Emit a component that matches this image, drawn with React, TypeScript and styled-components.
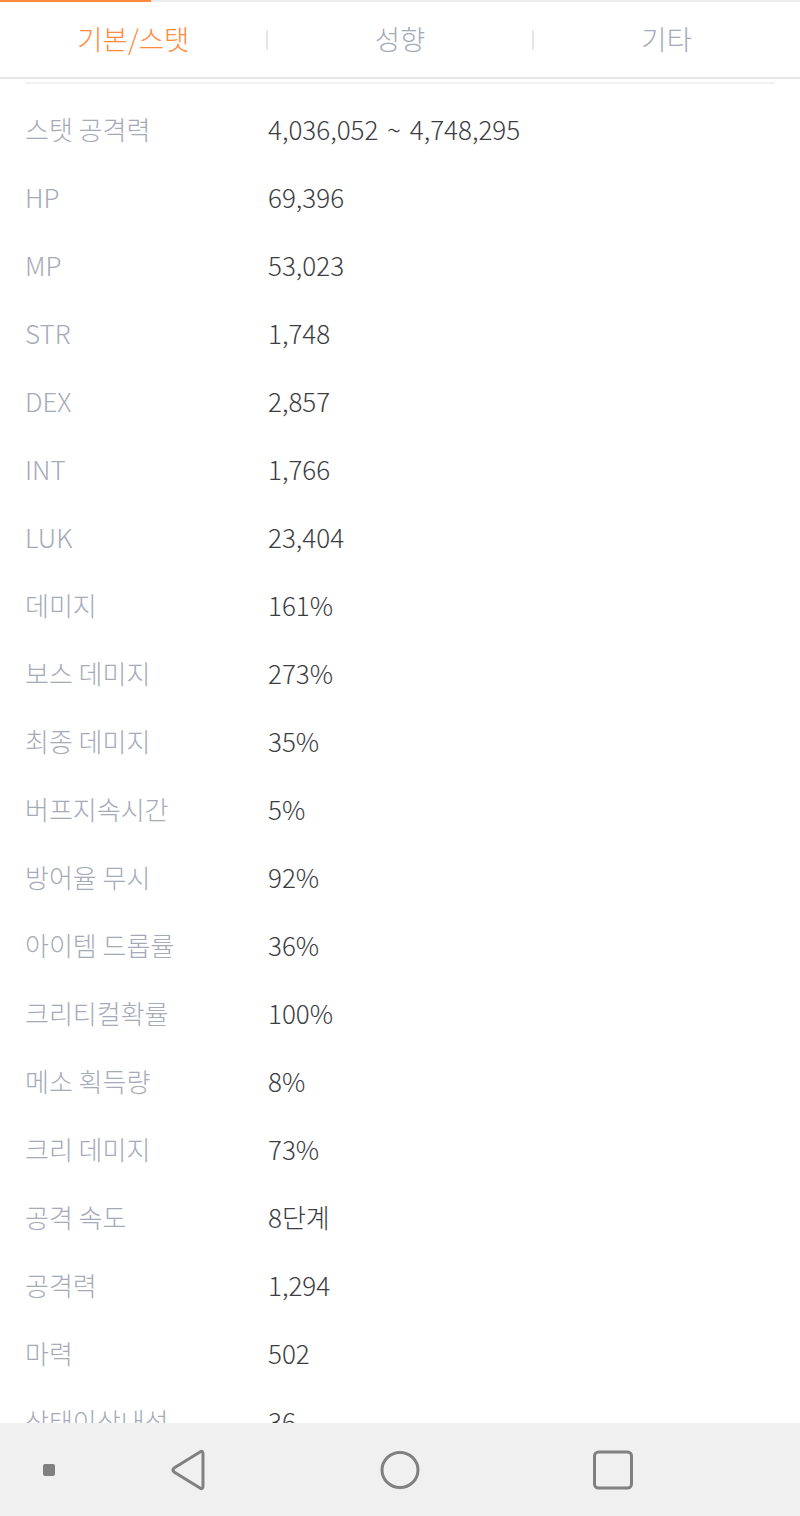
import React from "react";
import styled, { createGlobalStyle } from "styled-components";

const Global = createGlobalStyle`
  html, body { margin: 0; padding: 0; background: #ffffff; }
  body { font-family: "Noto Sans CJK KR", "Noto Sans", sans-serif; }
  * { box-sizing: border-box; }
`;

const Screen = styled.div`
  width: 800px;
  height: 1516px;
  display: flex;
  flex-direction: column;
  background: #ffffff;
  overflow: hidden;
`;

const Content = styled.div`
  flex: 1 1 auto;
  min-height: 0;
  overflow: hidden;
  display: flex;
  flex-direction: column;
`;

const Indicator = styled.div`
  flex-shrink: 0;
  height: 2px;
  background: #ececec;
  display: flex;
`;

const IndicatorFill = styled.div`
  width: 151px;
  height: 2px;
  background: #ff8a3d;
`;

const TabBar = styled.div`
  flex-shrink: 0;
  height: 77px;
  display: grid;
  grid-template-columns: repeat(3, 1fr);
  border-bottom: 2px solid #e6e6e6;
`;

const Tab = styled.div<{ $active?: boolean }>`
  position: relative;
  display: flex;
  align-items: center;
  justify-content: center;
  font-size: 27.5px;
  font-weight: 300;
  padding-bottom: 3px;
  color: ${(p) => (p.$active ? "#ff8a3d" : "#a4a9b8")};
`;

const Sep = styled.span`
  position: absolute;
  left: -1px;
  top: 28px;
  width: 2px;
  height: 20px;
  background: #e6e6e6;
`;

const InnerLine = styled.div`
  flex-shrink: 0;
  margin: 3px 25px 0;
  height: 2px;
  background: #f1f1f1;
`;

const List = styled.div`
  flex-shrink: 0;
  padding-top: 11px;
  display: flex;
  flex-direction: column;
`;

const Row = styled.div`
  flex-shrink: 0;
  height: 68px;
  display: grid;
  grid-template-columns: 243px 1fr;
  align-items: center;
  padding-left: 25px;
  font-size: 26px;
  font-weight: 300;
  line-height: 1;
`;

const Label = styled.span`
  color: #a5aab9;
  white-space: nowrap;
`;

const Value = styled.span`
  color: #3c3d42;
  white-space: pre;
  word-spacing: 3px;
`;

const NavBar = styled.div`
  height: 93px;
  flex-shrink: 0;
  background: #f0f0f0;
  display: grid;
  grid-template-columns: 98px 180px 244px 182px 1fr;
  align-items: center;
`;

const NavSlot = styled.div`
  display: flex;
  align-items: center;
  justify-content: center;
`;

const rows: [string, string][] = [
  ["스탯 공격력", "4,036,052 ~ 4,748,295"],
  ["HP", "69,396"],
  ["MP", "53,023"],
  ["STR", "1,748"],
  ["DEX", "2,857"],
  ["INT", "1,766"],
  ["LUK", "23,404"],
  ["데미지", "161%"],
  ["보스 데미지", "273%"],
  ["최종 데미지", "35%"],
  ["버프지속시간", "5%"],
  ["방어율 무시", "92%"],
  ["아이템 드롭률", "36%"],
  ["크리티컬확률", "100%"],
  ["메소 획득량", "8%"],
  ["크리 데미지", "73%"],
  ["공격 속도", "8단계"],
  ["공격력", "1,294"],
  ["마력", "502"],
  ["상태이상내성", "36"],
];

export default function App() {
  return (
    <>
      <Global />
      <Screen>
        <Content>
          <Indicator>
            <IndicatorFill />
          </Indicator>
          <TabBar>
            <Tab $active>기본/스탯</Tab>
            <Tab>
              <Sep />
              성향
            </Tab>
            <Tab>
              <Sep />
              기타
            </Tab>
          </TabBar>
          <InnerLine />
          <List>
            {rows.map(([l, v]) => (
              <Row key={l}>
                <Label>{l}</Label>
                <Value>{v}</Value>
              </Row>
            ))}
          </List>
        </Content>
        <NavBar>
          <NavSlot>
            <svg width="14" height="14" viewBox="0 0 14 14">
              <rect x="1" y="1" width="12" height="12" rx="2" fill="#808080" />
            </svg>
          </NavSlot>
          <NavSlot>
            <svg width="40" height="42" viewBox="0 0 40 42">
              <path
                d="M35 5 L35 37 Q35 41 32 39 L6 23 Q4 21 6 19 L32 3 Q35 1 35 5 Z"
                fill="none"
                stroke="#808080"
                strokeWidth="3"
                strokeLinejoin="round"
              />
            </svg>
          </NavSlot>
          <NavSlot>
            <svg width="42" height="40" viewBox="0 0 42 40">
              <ellipse cx="21" cy="20" rx="18" ry="17.5" fill="none" stroke="#808080" strokeWidth="3" />
            </svg>
          </NavSlot>
          <NavSlot>
            <svg width="42" height="40" viewBox="0 0 42 40">
              <rect x="2.5" y="2" width="37" height="36" rx="4" fill="none" stroke="#808080" strokeWidth="3" />
            </svg>
          </NavSlot>
          <div />
        </NavBar>
      </Screen>
    </>
  );
}
